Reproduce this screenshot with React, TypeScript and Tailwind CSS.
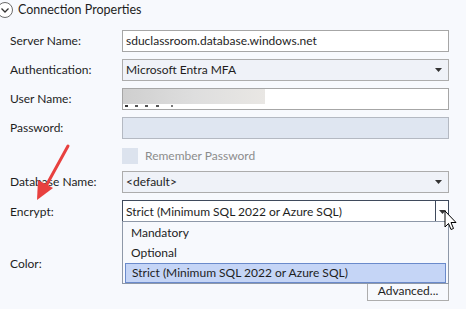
import React from "react";

const font = { fontFamily: '"Segoe UI", Lato, "Noto Sans", sans-serif' };

function Caret() {
  return (
    <svg width="7" height="4" viewBox="0 0 7 4" className="block">
      <path d="M0 0 H7 L3.5 4 Z" fill="#333" />
    </svg>
  );
}

function Row({ label, children, className = "" }: { label: string; children: React.ReactNode; className?: string }) {
  return (
    <div className={`flex items-center ${className}`}>
      <div className="w-[122px] pl-[10px] text-[#1e1e1e]">{label}</div>
      <div className="w-[327px]">{children}</div>
    </div>
  );
}

export default function App() {
  return (
    <div className="relative w-[466px] h-[309px] overflow-hidden bg-[#f7f9fd] text-[#1e1e1e] text-[12px]" style={font}>
      {/* header */}
      <div className="flex items-center h-[20px]">
        <div className="ml-[-3px] w-[16px] h-[16px] rounded-full border border-[#6b6b6b] bg-white flex items-center justify-center">
          <svg width="8" height="5" viewBox="0 0 8 5" className="block">
            <path d="M0.5 0.5 L4 4 L7.5 0.5" fill="none" stroke="#333" strokeWidth="1.3" />
          </svg>
        </div>
        <span className="ml-[5px] text-[12.5px]">Connection Properties</span>
      </div>

      <div className="flex flex-col mt-[10px]">
        <Row label="Server Name:">
          <div className="h-[22px] border border-[#a6a6a6] bg-white flex items-center px-[3px]">
            sduclassroom.database.windows.net
          </div>
        </Row>
        <Row label="Authentication:" className="mt-[7px]">
          <div className="h-[22px] border border-[#acacac] bg-[#eff2f8] flex items-center justify-between px-[3px] pr-[6px]">
            <span>Microsoft Entra MFA</span>
            <Caret />
          </div>
        </Row>
        <Row label="User Name:" className="mt-[7px]">
          <div className="relative h-[22px] border border-[#a6a6a6] bg-white overflow-hidden">
            <div className="absolute left-0 top-0 w-[142px] h-[15px] bg-gradient-to-r from-[#cfcfcf] via-[#dedede] to-[#e9e7e4]" />
            <div className="absolute left-[2px] top-[16px] w-[3px] h-[2px] bg-[#333]" />
            <div className="absolute left-[12px] top-[16px] w-[3px] h-[2px] bg-[#555]" />
            <div className="absolute left-[22px] top-[16px] w-[3px] h-[2px] bg-[#555]" />
            <div className="absolute left-[33px] top-[16px] w-[3px] h-[2px] bg-[#555]" />
            <div className="absolute left-[48px] top-[16px] w-[2px] h-[2px] bg-[#777]" />
          </div>
        </Row>
        <Row label="Password:" className="mt-[7px]">
          <div className="h-[22px] border border-[#b4b9c2] bg-[#dfe6f1]" />
        </Row>
        <div className="flex items-center mt-[8px] pl-[122px]">
          <div className="w-[16px] h-[16px] bg-[#dce3ee]" />
          <span className="ml-[7px] text-[#8c8c8c]">Remember Password</span>
        </div>
        <Row label="Database Name:" className="mt-[6px]">
          <div className="h-[22px] border border-[#acacac] bg-[#eff2f8] flex items-center justify-between px-[3px] pr-[6px]">
            <span>&lt;default&gt;</span>
            <Caret />
          </div>
        </Row>
        <Row label="Encrypt:" className="mt-[7px]">
          <div className="h-[23px] border border-[#3f4a5c] bg-white flex items-stretch">
            <div className="flex-1 flex items-center px-[3px]">Strict (Minimum SQL 2022 or Azure SQL)</div>
            <div className="w-[13px] border-l border-[#3f4a5c] flex items-center justify-center">
              <Caret />
            </div>
          </div>
        </Row>
        <Row label="Color:" className="mt-[31px]">
          <div className="h-[20px]" />
        </Row>
        <div className="flex justify-end pr-[17px] mt-[7px]">
          <div className="w-[82px] h-[20px] border border-[#adadad] bg-[#f7f9fd] flex items-center justify-center">
            Advanced...
          </div>
        </div>
      </div>

      {/* dropdown list */}
      <div className="absolute left-[122px] top-[221px] w-[327px] h-[63px] border border-[#8e98a8] bg-[#f7f9fd] flex flex-col pt-[1px]">
        <div className="h-[20px] flex items-center px-[8px]">Mandatory</div>
        <div className="h-[20px] flex items-center px-[8px]">Optional</div>
        <div className="h-[20px] mx-[2px] flex items-center px-[6px] bg-[#c5d5f6] border border-[#6a8acb]">
          Strict (Minimum SQL 2022 or Azure SQL)
        </div>
      </div>

      {/* red arrow */}
      <svg className="absolute left-0 top-0" width="466" height="309" viewBox="0 0 466 309">
        <line x1="68" y1="146" x2="46" y2="186" stroke="#e8413f" strokeWidth="3" strokeLinecap="round" />
        <path d="M37 200 L38 180 L53 188 Z" fill="#e8413f" />
      </svg>

      {/* cursor */}
      <svg className="absolute left-[444px] top-[210px]" width="14" height="22" viewBox="0 0 14 22">
        <path d="M1 1 L1 17 L4.5 13.5 L7 19.5 L9.5 18.5 L7 12.5 L12 12.5 Z" fill="#fff" stroke="#000" strokeWidth="1" strokeLinejoin="round" />
      </svg>
    </div>
  );
}
